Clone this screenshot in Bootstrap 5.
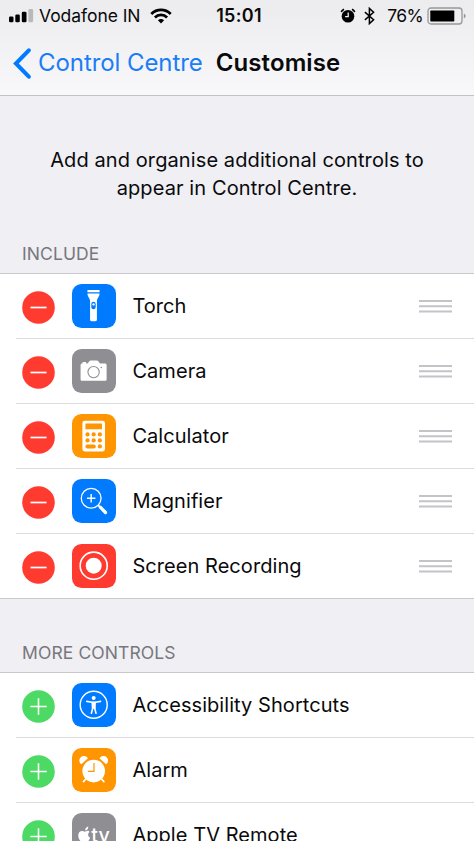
<!DOCTYPE html>
<html lang="en">
<head>
  <meta charset="UTF-8" />
  <meta name="viewport" content="width=device-width, initial-scale=1" />
  <title>Customise Control Centre</title>
  <link rel="stylesheet" href="https://cdn.jsdelivr.net/npm/bootstrap@5.3.3/dist/css/bootstrap.min.css" />
  <style>
    body {
      font-family: Inter, "Liberation Sans", sans-serif;
      background: #efeff4;
      color: #0a0a0c;
      height: 841px;
      overflow: hidden;
    }
    svg { display: block; flex: none; }
    .top-area {
      height: 96px;
      background: linear-gradient(#ececee, #f8f8fb);
      border-bottom: 1px solid #c2c2c6;
    }
    .status-line { height: 31px; font-size: 17.5px; line-height: 31px; padding: 0 6px 0 9px; }
    .carrier { letter-spacing: -0.05px; margin-left: 5px; }
    .wifi { margin-left: 10px; }
    .clock { font-weight: 600; font-size: 18px; letter-spacing: 0.3px; padding-left: 4px; }
    .percent { letter-spacing: -0.6px; }
    .title-line { height: 64px; padding-left: 13px; font-size: 24px; line-height: 64px; }
    .back-link { color: #1a7df5; letter-spacing: -0.07px; margin-left: 7px; }
    .page-title { font-size: 24px; font-weight: 600; line-height: 64px; letter-spacing: 0.1px; margin: 0 0 0 13px; }
    .intro { height: 132px; padding-top: 50px; font-size: 20px; line-height: 28px; letter-spacing: 0.1px; }
    .group-title { font-size: 17.5px; line-height: 24px; color: #77777c; letter-spacing: 0.1px; margin: 0; padding-left: 22px; font-weight: 400; }
    .group-first { height: 45px; padding-top: 14px; }
    .group-second { height: 73px; padding-top: 42px; }
    .control-list { border-top: 1px solid #c8c8cc; border-bottom: 1px solid #c8c8cc; background: #fff; padding-left: 16px; }
    .control-item { height: 65px; padding: 0 22px 0 6px; border-bottom: 1px solid #dcdcde; }
    .control-item:last-child { height: 64px; border-bottom: 0; }
    .toggle-icon { margin-top: 2px; }
    .app-icon { width: 43.4px; height: 43.4px; border-radius: 9.5px; margin: 0 16.6px 0 17.4px; }
    .bg-ios-blue { background: #007aff; }
    .bg-ios-gray { background: #8e8e93; }
    .bg-ios-orange { background: #ff9500; }
    .bg-ios-red { background: #ff3b30; }
    .control-name { font-size: 20px; letter-spacing: 0.06px; }
  </style>
</head>
<body>
  <!-- shared shapes -->
  <svg width="0" height="0" class="position-absolute">
    <defs>
      <g id="minus">
        <circle cx="16.5" cy="16.5" r="16.3" fill="#ff3b30"/>
        <path d="M8.5 16.5h16" stroke="#fff" stroke-width="1.7"/>
      </g>
      <g id="plus">
        <circle cx="16.5" cy="16.5" r="16.3" fill="#4cd964"/>
        <path d="M8.3 16.5h16.4M16.5 8.3v16.4" stroke="#fff" stroke-width="1.6"/>
      </g>
      <path id="grip" d="M0 2h33M0 7.2h33M0 12.4h33" stroke="#c4c4c8" stroke-width="2"/>
    </defs>
  </svg>

  <header class="top-area">
    <div class="status-line d-flex align-items-center justify-content-between position-relative">
      <div class="d-flex align-items-center">
        <svg width="25" height="14" viewBox="0 0 25 14">
          <rect x="0" y="7.5" width="4.5" height="5.8" rx="1.3"/>
          <rect x="6.3" y="5.5" width="4.5" height="7.8" rx="1.3"/>
          <rect x="12.8" y="2.7" width="4.7" height="10.6" rx="1.3"/>
          <rect x="19.4" y="0" width="4.7" height="13.3" rx="1.3" fill="#b9b9bc"/>
        </svg>
        <span class="carrier">Vodafone IN</span>
        <svg class="wifi" width="22" height="16" viewBox="0 0 22 16" fill="none" stroke="#000" stroke-width="2.8">
          <path d="M1.3 5.9C6.8.5 15.2.5 20.7 5.9"/>
          <path d="M4.9 9.4c3.4-3.3 8.8-3.3 12.2 0"/>
          <path d="M11 15.4l-3.1-3.2c1.8-1.5 4.4-1.5 6.2 0z" fill="#000" stroke="none"/>
        </svg>
      </div>
      <span class="clock position-absolute start-50 translate-middle-x">15:01</span>
      <div class="d-flex align-items-center">
        <svg width="16" height="15" viewBox="0 0 16 15">
          <circle cx="8" cy="8.2" r="6.3"/>
          <path d="M1.2 4A7 7 0 0 1 4 1.2M14.8 4A7 7 0 0 0 12 1.2" fill="none" stroke="#000" stroke-width="1.6"/>
          <path d="M8.2 4.4v4.2H5.1" fill="none" stroke="#f0f0f1" stroke-width="1.3"/>
        </svg>
        <svg class="mx-2" width="11" height="18" viewBox="0 0 11 18" fill="none" stroke="#000" stroke-width="1.5">
          <path d="M.9 5.1l8.7 7.6-4.2 3.9V1.4l4.2 3.9L.9 12.9"/>
        </svg>
        <span class="percent ms-1">76%</span>
        <svg class="ms-1" width="41" height="18" viewBox="0 0 41 18">
          <rect x="1" y="1" width="34" height="16" rx="3" fill="none" stroke="#98989c" stroke-width="1.3"/>
          <rect x="3.3" y="3.4" width="24" height="11.2" rx=".8"/>
          <path d="M36.8 6.5c2.4.8 2.4 4.2 0 5z" fill="#98989c"/>
        </svg>
      </div>
    </div>
    <div class="title-line d-flex align-items-center">
      <svg width="18" height="31" viewBox="0 0 18 31" fill="none" stroke="#007aff" stroke-width="4" stroke-linecap="round">
        <path d="M15.8 2.3L2.9 15.5l12.9 13.2"/>
      </svg>
      <a href="#" class="back-link text-decoration-none">Control Centre</a>
      <h1 class="page-title">Customise</h1>
    </div>
  </header>

  <main>
    <p class="intro text-center mb-0">Add and organise additional controls to<br>appear in Control Centre.</p>

    <h2 class="group-title group-first">INCLUDE</h2>
    <div class="control-list">
      <div class="control-item d-flex align-items-center">
        <svg class="toggle-icon" width="33" height="33"><use href="#minus"/></svg>
        <svg class="app-icon bg-ios-blue" viewBox="0 0 43 43" fill="#fff">
          <path d="M15.3 6h12v2.1h-12zM15.3 9.3h12c0 3.4-2.6 4.5-2.6 7.6v18.4c0 1.2-.5 1.7-1.6 1.7h-3.6c-1.1 0-1.6-.5-1.6-1.7V16.9c0-3.1-2.6-4.2-2.6-7.6z"/>
          <rect x="19.1" y="17.7" width="4.4" height="7.2" rx="2.2" fill="#007aff"/>
          <circle cx="21.3" cy="20.2" r="1.2"/>
        </svg>
        <span class="control-name">Torch</span>
        <svg class="ms-auto" width="33" height="15"><use href="#grip"/></svg>
      </div>
      <div class="control-item d-flex align-items-center">
        <svg class="toggle-icon" width="33" height="33"><use href="#minus"/></svg>
        <svg class="app-icon bg-ios-gray" viewBox="0 0 43 43" fill="#fff">
          <path d="M10.3 14.4v-.8c0-.5.3-.8.8-.8h2.2c.5 0 .8.3.8.8v.8h1.1c1.3 0 1.3-2.9 3.3-2.9h6.2c2 0 2 2.9 3.6 2.9h4.4c1 0 1.6.6 1.6 1.6v13.9c0 1-.6 1.6-1.6 1.6H10.1c-1 0-1.6-.6-1.6-1.6V16c0-1 .6-1.6 1.8-1.6z"/>
          <circle cx="21.4" cy="22.9" r="5.6" fill="none" stroke="#8e8e93" stroke-width="1.1"/>
          <circle cx="29" cy="18.3" r=".8" fill="#8e8e93"/>
        </svg>
        <span class="control-name">Camera</span>
        <svg class="ms-auto" width="33" height="15"><use href="#grip"/></svg>
      </div>
      <div class="control-item d-flex align-items-center">
        <svg class="toggle-icon" width="33" height="33"><use href="#minus"/></svg>
        <svg class="app-icon bg-ios-orange" viewBox="0 0 43 43">
          <rect x="10.3" y="6.6" width="22.4" height="30.5" rx="2.4" fill="#fff"/>
          <g fill="#ff9500">
            <rect x="13.3" y="9.4" width="16.4" height="5.7" rx=".6"/>
            <circle cx="15.4" cy="20.2" r="2.1"/><circle cx="21.5" cy="20.2" r="2.1"/><circle cx="27.6" cy="20.2" r="2.1"/>
            <circle cx="15.4" cy="26.2" r="2.1"/><circle cx="21.5" cy="26.2" r="2.1"/><circle cx="27.6" cy="26.2" r="2.1"/>
            <rect x="13.3" y="30.3" width="10.3" height="3.8" rx="1.9"/><circle cx="27.6" cy="32.2" r="2.1"/>
          </g>
        </svg>
        <span class="control-name">Calculator</span>
        <svg class="ms-auto" width="33" height="15"><use href="#grip"/></svg>
      </div>
      <div class="control-item d-flex align-items-center">
        <svg class="toggle-icon" width="33" height="33"><use href="#minus"/></svg>
        <svg class="app-icon bg-ios-blue" viewBox="0 0 43 43" fill="none" stroke="#fff">
          <circle cx="19" cy="19" r="9.8" stroke-width="1.3"/>
          <path d="M19 14.8v8.4M14.8 19h8.4" stroke-width="1.4"/>
          <path d="M25.9 25.9l2 2" stroke-width="1.6"/>
          <path d="M28 27.9l5.2 5.3" stroke-width="3.2" stroke-linecap="round"/>
        </svg>
        <span class="control-name">Magnifier</span>
        <svg class="ms-auto" width="33" height="15"><use href="#grip"/></svg>
      </div>
      <div class="control-item d-flex align-items-center">
        <svg class="toggle-icon" width="33" height="33"><use href="#minus"/></svg>
        <svg class="app-icon bg-ios-red" viewBox="0 0 43 43">
          <circle cx="21.5" cy="21.5" r="13.4" fill="none" stroke="#fff" stroke-width="1.6"/>
          <circle cx="21.5" cy="21.5" r="7.9" fill="#fff"/>
        </svg>
        <span class="control-name">Screen Recording</span>
        <svg class="ms-auto" width="33" height="15"><use href="#grip"/></svg>
      </div>
    </div>

    <h2 class="group-title group-second">MORE CONTROLS</h2>
    <div class="control-list">
      <div class="control-item d-flex align-items-center">
        <svg class="toggle-icon" width="33" height="33"><use href="#plus"/></svg>
        <svg class="app-icon bg-ios-blue" viewBox="0 0 43 43">
          <circle cx="21.5" cy="21.5" r="13.4" fill="none" stroke="#fff" stroke-width="1.4"/>
          <circle cx="21.5" cy="14.8" r="2" fill="#fff"/>
          <path d="M14.7 18.2l5 .9h3.6l5-.9M19.2 30l1.6-6h1.4l1.6 6" fill="none" stroke="#fff" stroke-width="1.6" stroke-linecap="round"/>
          <path d="M19.2 18.5h4.6l-.4 7h-3.8z" fill="#fff"/>
        </svg>
        <span class="control-name">Accessibility Shortcuts</span>
      </div>
      <div class="control-item d-flex align-items-center">
        <svg class="toggle-icon" width="33" height="33"><use href="#plus"/></svg>
        <svg class="app-icon bg-ios-orange" viewBox="0 0 43 43" fill="#fff">
          <circle cx="21.5" cy="22.9" r="11.2"/>
          <path d="M9.2 16.2a4.6 4.6 0 1 1 6.6-6.1zM33.8 16.2a4.6 4.6 0 1 0-6.6-6.1z"/>
          <path d="M13.9 30.5l-2.5 2.8M29.1 30.5l2.5 2.8" stroke="#fff" stroke-width="1.7" stroke-linecap="round"/>
          <path d="M21.8 14.8v8.3h-6.1" fill="none" stroke="#ff9500" stroke-width="1.2"/>
        </svg>
        <span class="control-name">Alarm</span>
      </div>
      <div class="control-item d-flex align-items-center">
        <svg class="toggle-icon" width="33" height="33"><use href="#plus"/></svg>
        <svg class="app-icon bg-ios-gray" viewBox="0 0 43 43" fill="#fff">
          <path d="M13.1 17.4c-.2-2 1.3-3.7 3-4 .2 2.2-1.3 3.8-3 4zM17.4 18.9c-2.1 1.4-1.8 4.5.6 5.5-.5 1.7-1.9 4.1-3.3 4.1-1 0-1.3-.6-2.4-.6s-1.5.6-2.4.6c-1.8 0-3.7-3.5-3.7-6.2 0-3.1 1.9-4.5 3.7-4.5 1.1 0 1.9.7 2.7.7s1.8-.8 3.1-.8c.6 0 1.3.3 1.7 1.2z"/>
          <text x="19.2" y="28.3" font-size="19.5" font-weight="500">tv</text>
        </svg>
        <span class="control-name">Apple TV Remote</span>
      </div>
    </div>
  </main>

  <script src="https://cdn.jsdelivr.net/npm/bootstrap@5.3.3/dist/js/bootstrap.bundle.min.js"></script>
</body>
</html>
